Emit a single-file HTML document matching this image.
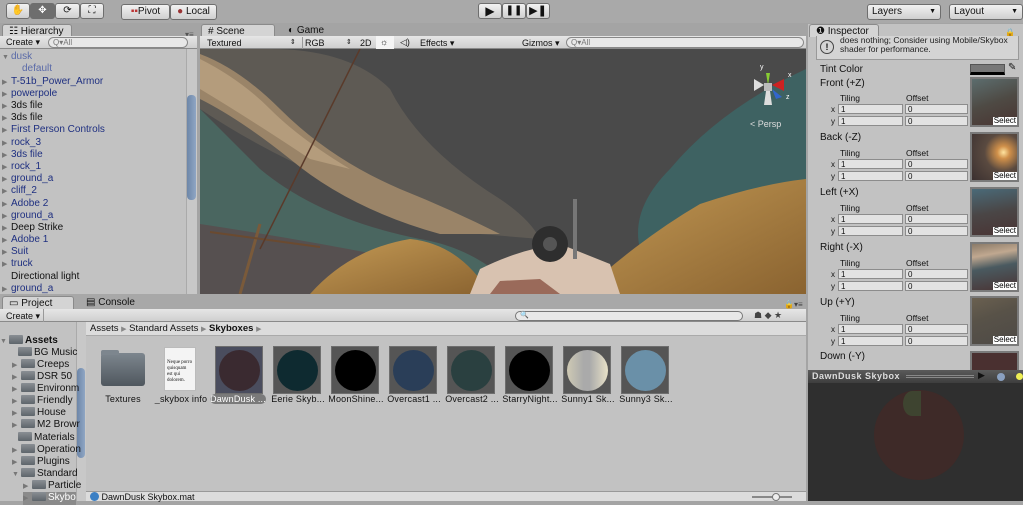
<!DOCTYPE html>
<html><head><meta charset="utf-8"><style>
*{box-sizing:border-box;margin:0;padding:0}
body{width:1023px;height:501px;overflow:hidden;background:#a4a4a4;font-family:"Liberation Sans","DejaVu Sans",sans-serif;font-size:10px;color:#111;position:relative}
.a{position:absolute}
.btn{position:absolute;background:linear-gradient(#f2f2f2,#cfcfcf);border:1px solid #6e6e6e;border-radius:3px;height:16px;font-size:10px;line-height:14px;text-align:center}
.tab{position:absolute;height:13px;font-size:10px;line-height:13px;padding-left:6px}
.tbar{position:absolute;background:linear-gradient(#e6e6e6,#cfcfcf);border-bottom:1px solid #8a8a8a;height:13px}
.row{position:absolute;left:2px;font-size:10px;line-height:12px;color:#1e2f80;white-space:nowrap}
.row.k{color:#111}
.tri{color:#777;font-size:7px;display:inline-block;width:9px}
.fld{position:absolute;height:10px;background:#e2e2e2;border:1px solid #8c8c8c;font-size:8px;line-height:9px;padding-left:2px}
.lbl{position:absolute;left:820px;font-size:10px}
.thumb{position:absolute;left:970px;width:49px;height:50px;border:2px solid #7a7a7a}
.sel{position:absolute;right:0;bottom:0;background:#fff;font-size:8px;line-height:8px;padding:0 1px;color:#000}
.icon{position:absolute;top:346px;width:48px;height:48px;background:#555;border:1px solid #6e6e6e}
.icon div{position:absolute;left:3px;top:3px;width:41px;height:41px;border-radius:50%}
.nm{position:absolute;top:394px;font-size:9px;width:62px;text-align:center;letter-spacing:.2px;white-space:nowrap;overflow:hidden}
.fr{position:absolute;left:0;font-size:10px;line-height:12px;white-space:nowrap}
.fold{display:inline-block;width:14px;height:9px;background:linear-gradient(#8a8f94,#5e656b);border-radius:1px;vertical-align:-1px;margin-right:2px}
</style></head><body>

<div class="a" style="left:0;top:0;width:1023px;height:23px;background:#a9a9a9"></div>
<div class="btn" style="left:6px;top:3px;width:24px">✋</div>
<div class="btn" style="left:30px;top:3px;width:25px;background:#6e6e6e;color:#fff">✥</div>
<div class="btn" style="left:55px;top:3px;width:25px">⟳</div>
<div class="btn" style="left:80px;top:3px;width:24px">⛶</div>
<div class="btn" style="left:121px;top:4px;width:49px"><span style="color:#b33">▪▪</span>Pivot</div>
<div class="btn" style="left:170px;top:4px;width:47px"><span style="color:#933">●</span> Local</div>
<div class="btn" style="left:478px;top:3px;width:24px;font-size:12px">▶</div>
<div class="btn" style="left:502px;top:3px;width:24px;font-weight:bold">❚❚</div>
<div class="btn" style="left:526px;top:3px;width:24px;font-size:11px">▶❚</div>
<div class="btn" style="left:867px;top:4px;width:74px;text-align:left;padding-left:4px">Layers<span style="float:right;margin-right:4px;font-size:7px">▼</span></div>
<div class="btn" style="left:949px;top:4px;width:74px;text-align:left;padding-left:4px">Layout<span style="float:right;margin-right:4px;font-size:7px">▼</span></div>

<div class="tab" style="left:2px;top:24px;width:70px;background:#d4d4d4;border:1px solid #8a8a8a;border-bottom:none;border-radius:3px 3px 0 0">☷ Hierarchy</div>
<div class="a" style="left:185px;top:30px;font-size:8px;color:#555">▾≡</div>
<div class="tbar" style="left:0;top:36px;width:197px"></div>
<div class="a" style="left:6px;top:37px;font-size:9px">Create ▾</div>
<div class="a" style="left:48px;top:37px;width:140px;height:11px;border:1px solid #888;border-radius:6px;background:#e8e8e8;font-size:8px;line-height:9px;padding-left:4px;color:#777">Q▾All</div>
<div class="a" style="left:0;top:49px;width:197px;height:245px;background:#c2c2c2"></div>
<div class="a" style="left:186px;top:49px;width:11px;height:245px;background:#c8c8c8;border-left:1px solid #aaa"></div>
<div class="a" style="left:187px;top:95px;width:9px;height:105px;background:linear-gradient(90deg,#6d86a8,#8fa6c4);border-radius:4px"></div>
<div class="row" style="top:51px;color:#5a6aa8"><span class="tri">▼</span>dusk</div>
<div class="row" style="top:63px;left:22px;color:#5a6aa8">default</div>
<div class="row" style="top:76px"><span class="tri">▶</span>T-51b_Power_Armor</div>
<div class="row" style="top:88px"><span class="tri">▶</span>powerpole</div>
<div class="row k" style="top:100px"><span class="tri">▶</span>3ds file</div>
<div class="row k" style="top:112px"><span class="tri">▶</span>3ds file</div>
<div class="row" style="top:124px"><span class="tri">▶</span>First Person Controls</div>
<div class="row" style="top:137px"><span class="tri">▶</span>rock_3</div>
<div class="row" style="top:149px"><span class="tri">▶</span>3ds file</div>
<div class="row" style="top:161px"><span class="tri">▶</span>rock_1</div>
<div class="row" style="top:173px"><span class="tri">▶</span>ground_a</div>
<div class="row" style="top:185px"><span class="tri">▶</span>cliff_2</div>
<div class="row" style="top:198px"><span class="tri">▶</span>Adobe 2</div>
<div class="row" style="top:210px"><span class="tri">▶</span>ground_a</div>
<div class="row k" style="top:222px"><span class="tri">▶</span>Deep Strike</div>
<div class="row" style="top:234px"><span class="tri">▶</span>Adobe 1</div>
<div class="row" style="top:246px"><span class="tri">▶</span>Suit</div>
<div class="row" style="top:258px"><span class="tri">▶</span>truck</div>
<div class="row k" style="top:271px"><span class="tri"></span>Directional light</div>
<div class="row" style="top:283px"><span class="tri">▶</span>ground_a</div>

<div class="tab" style="left:201px;top:24px;width:74px;background:#d4d4d4;border:1px solid #8a8a8a;border-bottom:none;border-radius:3px 3px 0 0"># Scene</div>
<div class="tab" style="left:282px;top:24px">◐ Game</div>
<div class="tbar" style="left:200px;top:36px;width:606px"></div>
<div class="a" style="left:207px;top:38px;font-size:9px">Textured</div>
<div class="a" style="left:290px;top:38px;font-size:7px">⇕</div>
<div class="a" style="left:302px;top:37px;width:1px;height:12px;background:#999"></div>
<div class="a" style="left:305px;top:38px;font-size:9px">RGB</div>
<div class="a" style="left:346px;top:38px;font-size:7px">⇕</div>
<div class="a" style="left:360px;top:38px;font-size:9px">2D</div>
<div class="a" style="left:376px;top:36px;width:18px;height:13px;background:#f4f4f4"></div>
<div class="a" style="left:380px;top:37px;font-size:9px">☼</div>
<div class="a" style="left:400px;top:37px;font-size:9px">◁)</div>
<div class="a" style="left:420px;top:38px;font-size:9px">Effects ▾</div>
<div class="a" style="left:522px;top:38px;font-size:9px">Gizmos ▾</div>
<div class="a" style="left:566px;top:37px;width:238px;height:11px;border:1px solid #888;border-radius:6px;background:#e8e8e8;font-size:8px;line-height:9px;padding-left:4px;color:#777">Q▾All</div>
<svg class="a" style="left:200px;top:49px" width="606" height="245" viewBox="0 0 606 245">
<defs>
<linearGradient id="tr" x1="0" y1="0" x2="1" y2="1"><stop offset="0" stop-color="#c49a55"/><stop offset="1" stop-color="#8a6330"/></linearGradient>
</defs>
<rect width="606" height="245" fill="#4a4a4a"/>
<path d="M0 60 L0 245 L320 245 Q280 200 220 190 Q120 170 60 120Z" fill="#4a6660"/>
<path d="M0 0 L70 0 Q150 0 190 40 Q220 100 300 150 Q330 170 340 190 L280 185 Q190 160 130 130 Q60 100 0 60Z" fill="#5e5a54"/>
<path d="M0 5 Q40 20 80 60 Q130 110 200 140 Q250 160 300 185 L240 185 Q150 160 90 110 Q40 70 0 50Z" fill="#9a8468"/>
<path d="M0 10 Q40 30 70 60 Q100 90 150 120 L110 110 Q50 70 0 40Z" fill="#b49c7c"/>
<path d="M606 20 L606 140 Q520 160 440 200 Q430 160 470 120 Q520 60 606 20Z" fill="#3e6262"/>
<path d="M0 175 Q100 190 200 210 L200 245 L0 245Z" fill="#565050"/>
<path d="M110 245 Q150 200 210 190 Q260 195 290 245Z" fill="url(#tr)"/>
<path d="M380 245 Q440 190 500 155 Q560 135 606 130 L606 245Z" fill="url(#tr)"/>
<path d="M270 245 L280 220 Q320 200 360 195 L410 215 L420 245Z" fill="#d8c2b0"/>
<path d="M290 245 L300 232 L340 230 L360 245Z" fill="#9a6a5a"/>
<circle cx="350" cy="195" r="18" fill="#2e2e2e"/><circle cx="350" cy="195" r="7" fill="#555"/>
<rect x="373" y="150" width="4" height="60" fill="#777"/>
<line x1="40" y1="245" x2="60" y2="175" stroke="#7a5a3a" stroke-width="3"/>
<line x1="10" y1="183" x2="120" y2="198" stroke="#6a4a30" stroke-width="2"/>
<line x1="160" y1="0" x2="60" y2="200" stroke="#5a3a2a" stroke-width="1.5"/>
<g transform="translate(568,38)"><polygon points="-2,-14 2,-14 0,-2" fill="#8c3"/><polygon points="4,-2 16,-8 16,4" fill="#c22"/><polygon points="4,2 14,10 8,12" fill="#36c"/><polygon points="-4,-2 -14,-8 -14,4" fill="#ddd"/><polygon points="-2,4 2,4 4,18 -4,18" fill="#ddd"/><rect x="-4" y="-4" width="8" height="8" fill="#bbb"/></g>
<text x="560" y="20" font-size="7" fill="#fff">y</text><text x="588" y="28" font-size="7" fill="#fff">x</text><text x="586" y="50" font-size="7" fill="#fff">z</text>
<text x="550" y="78" font-size="9" fill="#ddd" font-family="Liberation Sans">&lt; Persp</text>
</svg>

<div class="a" style="left:808px;top:24px;width:215px;height:346px;background:#c2c2c2"></div>
<div class="tab" style="left:809px;top:24px;width:70px;background:#d4d4d4;border:1px solid #8a8a8a;border-bottom:none;border-radius:3px 3px 0 0">❶ Inspector</div>
<div class="a" style="left:1005px;top:28px;font-size:8px;color:#555">🔒</div>
<div class="a" style="left:816px;top:36px;width:203px;height:24px;background:#d4d4d4;border:1px solid #999;border-top:none;font-size:8.5px;line-height:9px;padding-left:23px;color:#222">does nothing; Consider using Mobile/Skybox<br>shader for performance.</div>
<div class="a" style="left:820px;top:40px;width:14px;height:14px;border:1px solid #444;border-radius:50%;font-size:9px;text-align:center;line-height:12px;font-weight:bold">!</div>
<div class="lbl" style="top:64px">Tint Color</div>
<div class="a" style="left:970px;top:64px;width:35px;height:11px;background:#777;border:1px solid #555;border-bottom:3px solid #000"></div>
<div class="a" style="left:1008px;top:62px;font-size:10px">✎</div>

<div class="lbl" style="top:78px">Front (+Z)</div>
<div class="a" style="left:840px;top:93px;font-size:8.5px">Tiling</div><div class="a" style="left:906px;top:93px;font-size:8.5px">Offset</div>
<div class="a" style="left:831px;top:105px;font-size:8px">x</div><div class="fld" style="left:838px;top:104px;width:65px">1</div><div class="fld" style="left:905px;top:104px;width:63px">0</div>
<div class="a" style="left:831px;top:117px;font-size:8px">y</div><div class="fld" style="left:838px;top:116px;width:65px">1</div><div class="fld" style="left:905px;top:116px;width:63px">0</div>
<div class="thumb" style="top:77px;background:linear-gradient(160deg,#5c6d6e,#4e4a44 50%,#4a3532)"><div class="sel">Select</div></div>

<div class="lbl" style="top:132px">Back (-Z)</div>
<div class="a" style="left:840px;top:148px;font-size:8.5px">Tiling</div><div class="a" style="left:906px;top:148px;font-size:8.5px">Offset</div>
<div class="a" style="left:831px;top:160px;font-size:8px">x</div><div class="fld" style="left:838px;top:159px;width:65px">1</div><div class="fld" style="left:905px;top:159px;width:63px">0</div>
<div class="a" style="left:831px;top:172px;font-size:8px">y</div><div class="fld" style="left:838px;top:171px;width:65px">1</div><div class="fld" style="left:905px;top:171px;width:63px">0</div>
<div class="thumb" style="top:132px;background:radial-gradient(circle at 70% 40%,#ffe4a0 0,#d0904a 15%,#5a4a40 45%,#3a3030)"><div class="sel">Select</div></div>

<div class="lbl" style="top:187px">Left (+X)</div>
<div class="a" style="left:840px;top:203px;font-size:8.5px">Tiling</div><div class="a" style="left:906px;top:203px;font-size:8.5px">Offset</div>
<div class="a" style="left:831px;top:215px;font-size:8px">x</div><div class="fld" style="left:838px;top:214px;width:65px">1</div><div class="fld" style="left:905px;top:214px;width:63px">0</div>
<div class="a" style="left:831px;top:227px;font-size:8px">y</div><div class="fld" style="left:838px;top:226px;width:65px">1</div><div class="fld" style="left:905px;top:226px;width:63px">0</div>
<div class="thumb" style="top:187px;background:linear-gradient(170deg,#4a6a78,#4a4646 50%,#4a3434)"><div class="sel">Select</div></div>

<div class="lbl" style="top:242px">Right (-X)</div>
<div class="a" style="left:840px;top:258px;font-size:8.5px">Tiling</div><div class="a" style="left:906px;top:258px;font-size:8.5px">Offset</div>
<div class="a" style="left:831px;top:270px;font-size:8px">x</div><div class="fld" style="left:838px;top:269px;width:65px">1</div><div class="fld" style="left:905px;top:269px;width:63px">0</div>
<div class="a" style="left:831px;top:282px;font-size:8px">y</div><div class="fld" style="left:838px;top:281px;width:65px">1</div><div class="fld" style="left:905px;top:281px;width:63px">0</div>
<div class="thumb" style="top:242px;background:linear-gradient(170deg,#8a7a68,#c0a890 25%,#4a5a60 50%,#4a3434)"><div class="sel">Select</div></div>

<div class="lbl" style="top:297px">Up (+Y)</div>
<div class="a" style="left:840px;top:313px;font-size:8.5px">Tiling</div><div class="a" style="left:906px;top:313px;font-size:8.5px">Offset</div>
<div class="a" style="left:831px;top:325px;font-size:8px">x</div><div class="fld" style="left:838px;top:324px;width:65px">1</div><div class="fld" style="left:905px;top:324px;width:63px">0</div>
<div class="a" style="left:831px;top:337px;font-size:8px">y</div><div class="fld" style="left:838px;top:336px;width:65px">1</div><div class="fld" style="left:905px;top:336px;width:63px">0</div>
<div class="thumb" style="top:296px;background:linear-gradient(160deg,#6a6050,#585248 40%,#4e4a46)"><div class="sel">Select</div></div>

<div class="lbl" style="top:351px">Down (-Y)</div>
<div class="thumb" style="top:351px;height:20px;background:#4a3030;border-bottom:none"></div>

<div class="a" style="left:808px;top:370px;width:215px;height:13px;background:linear-gradient(#5a5a5a,#3e3e3e);color:#ddd;font-size:9px;font-weight:bold;line-height:13px;padding-left:4px;letter-spacing:.5px">DawnDusk Skybox</div>
<div class="a" style="left:906px;top:375px;width:68px;height:3px;border-top:1px solid #888;border-bottom:1px solid #888"></div>
<div class="a" style="left:978px;top:370px;color:#111;font-size:9px">▶</div>
<div class="a" style="left:997px;top:373px;width:8px;height:8px;border-radius:50%;background:#8aa0c0"></div>
<div class="a" style="left:1016px;top:373px;width:7px;height:7px;border-radius:50%;background:#ee5"></div>
<div class="a" style="left:808px;top:383px;width:215px;height:118px;background:#2f2f2f"></div>
<div class="a" style="left:874px;top:390px;width:90px;height:90px;border-radius:50%;background:#3e2a28"></div>
<div class="a" style="left:903px;top:391px;width:18px;height:25px;border-radius:50% 0 0 50%;background:#3e4430"></div>

<div class="a" style="left:0;top:294px;width:806px;height:207px;background:#a8a8a8"></div>
<div class="tab" style="left:2px;top:296px;width:72px;background:#d4d4d4;border:1px solid #8a8a8a;border-bottom:none;border-radius:3px 3px 0 0">▭ Project</div>
<div class="tab" style="left:80px;top:296px">▤ Console</div>
<div class="a" style="left:784px;top:300px;font-size:8px;color:#444">🔒▾≡</div>
<div class="tbar" style="left:0;top:309px;width:806px"></div>
<div class="a" style="left:6px;top:311px;font-size:9px">Create ▾</div>
<div class="a" style="left:43px;top:309px;width:1px;height:13px;background:#999"></div>
<div class="a" style="left:515px;top:311px;width:228px;height:10px;border:1px solid #777;border-radius:6px;background:#e8e8e8;font-size:7px;line-height:8px;padding-left:4px">🔍</div>
<div class="a" style="left:754px;top:310px;font-size:9px;color:#444">☗ ◆ ★</div>
<div class="a" style="left:0;top:322px;width:86px;height:179px;background:#c2c2c2"></div>
<div class="a" style="left:76px;top:322px;width:10px;height:179px;background:#c8c8c8;border-left:1px solid #aaa"></div>
<div class="a" style="left:77px;top:368px;width:8px;height:90px;background:linear-gradient(90deg,#6d86a8,#8fa6c4);border-radius:4px"></div>
<div class="fr" style="top:335px;font-weight:bold"><span class="tri">▼</span><span class="fold"></span>Assets</div>
<div class="fr" style="top:347px;left:18px"><span class="fold"></span>BG Music</div>
<div class="fr" style="top:359px;left:12px"><span class="tri">▶</span><span class="fold"></span>Creeps</div>
<div class="fr" style="top:371px;left:12px"><span class="tri">▶</span><span class="fold"></span>DSR 50</div>
<div class="fr" style="top:383px;left:12px"><span class="tri">▶</span><span class="fold"></span>Environm</div>
<div class="fr" style="top:395px;left:12px"><span class="tri">▶</span><span class="fold"></span>Friendly</div>
<div class="fr" style="top:407px;left:12px"><span class="tri">▶</span><span class="fold"></span>House</div>
<div class="fr" style="top:419px;left:12px"><span class="tri">▶</span><span class="fold"></span>M2 Browr</div>
<div class="fr" style="top:432px;left:18px"><span class="fold"></span>Materials</div>
<div class="fr" style="top:444px;left:12px"><span class="tri">▶</span><span class="fold"></span>Operation</div>
<div class="fr" style="top:456px;left:12px"><span class="tri">▶</span><span class="fold"></span>Plugins</div>
<div class="fr" style="top:468px;left:12px"><span class="tri">▼</span><span class="fold"></span>Standard</div>
<div class="fr" style="top:480px;left:23px"><span class="tri">▶</span><span class="fold"></span>Particle</div>
<div class="fr" style="top:492px;left:23px;background:#8a8a8a;color:#fff;width:53px;overflow:hidden"><span class="tri">▶</span><span class="fold"></span>Skybo</div>
<div class="a" style="left:86px;top:322px;width:720px;height:14px;background:#dcdcdc;border-bottom:1px solid #aaa;font-size:9.5px;line-height:14px;padding-left:4px">Assets <span style="color:#888;font-size:7px">▶</span> Standard Assets <span style="color:#888;font-size:7px">▶</span> <b>Skyboxes</b> <span style="color:#888;font-size:7px">▶</span></div>
<div class="a" style="left:86px;top:336px;width:720px;height:155px;background:#c2c2c2"></div>
<div class="a" style="left:86px;top:491px;width:720px;height:10px;background:#dcdcdc;border-top:1px solid #999;font-size:9px;line-height:10px;padding-left:4px"><span style="display:inline-block;width:9px;height:9px;border-radius:50%;background:#3b7fc4;vertical-align:-1px"></span> DawnDusk Skybox.mat</div>
<div class="a" style="left:752px;top:496px;width:40px;height:2px;background:#888"></div>
<div class="a" style="left:772px;top:493px;width:8px;height:8px;border-radius:50%;background:#eee;border:1px solid #777"></div>

<div class="a" style="left:101px;top:353px;width:44px;height:33px;border-radius:3px;background:linear-gradient(#7d868e,#4f575e)"></div>
<div class="a" style="left:101px;top:350px;width:18px;height:5px;border-radius:2px 2px 0 0;background:#7d868e"></div>
<div class="nm" style="left:92px">Textures</div>
<div class="a" style="left:164px;top:347px;width:32px;height:44px;background:#f4f4f4;border:1px solid #bbb;font-family:'Liberation Serif',serif;font-size:5px;padding:12px 2px 0;line-height:6px">Neque porro quisquam est qui dolorem.</div>
<div class="nm" style="left:150px">_skybox info</div>
<div class="icon" style="left:215px;background:#4a4d5e"><div style="background:#3a2a30"></div></div>
<div class="nm" style="left:210px;background:#7a7a7a;color:#fff;border-radius:6px;width:56px">DawnDusk ...</div>
<div class="icon" style="left:273px"><div style="background:#0e2a30"></div></div>
<div class="nm" style="left:267px">Eerie Skyb...</div>
<div class="icon" style="left:331px"><div style="background:#000"></div></div>
<div class="nm" style="left:325px">MoonShine...</div>
<div class="icon" style="left:389px"><div style="background:#2a3e58"></div></div>
<div class="nm" style="left:383px">Overcast1 ...</div>
<div class="icon" style="left:447px"><div style="background:#2a4040"></div></div>
<div class="nm" style="left:441px">Overcast2 ...</div>
<div class="icon" style="left:505px"><div style="background:#000"></div></div>
<div class="nm" style="left:499px">StarryNight...</div>
<div class="icon" style="left:563px"><div style="background:linear-gradient(90deg,#cfcab4,#aaa 40%,#aaa 55%,#e8e2c8)"></div></div>
<div class="nm" style="left:557px">Sunny1 Sk...</div>
<div class="icon" style="left:621px"><div style="background:#6a90a8"></div></div>
<div class="nm" style="left:615px">Sunny3 Sk...</div>
</body></html>
